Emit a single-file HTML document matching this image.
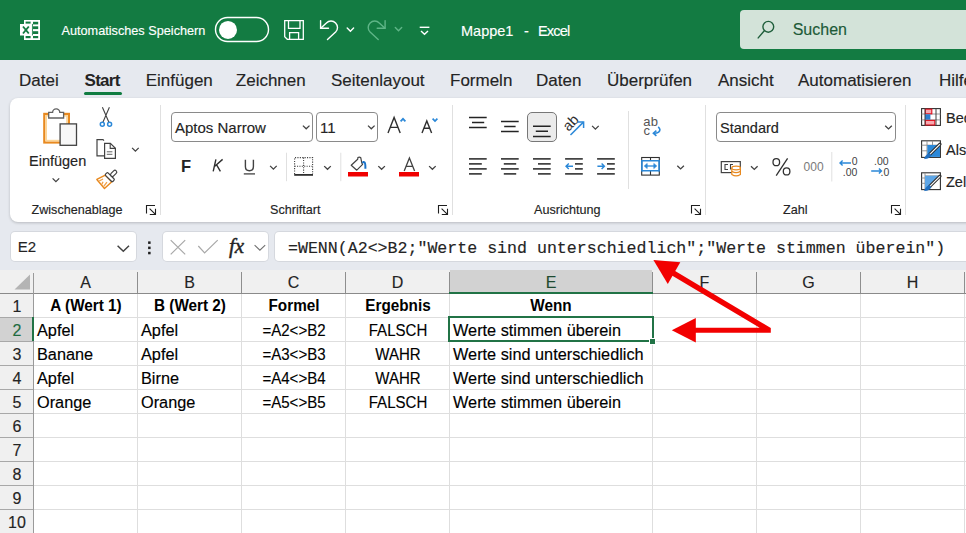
<!DOCTYPE html>
<html><head><meta charset="utf-8">
<style>
*{margin:0;padding:0;box-sizing:border-box}
html,body{width:966px;height:533px;overflow:hidden}
body{position:relative;background:#e6e9ef;font-family:"Liberation Sans",sans-serif;color:#242424}
.a{position:absolute}
.t{position:absolute;white-space:nowrap;-webkit-text-stroke:0.15px currentColor;line-height:0;left:calc(var(--x)*1px);top:calc(var(--b)*1px - var(--f)*0.3465px);font-size:calc(var(--f)*1px)}
.m{font-family:"Liberation Mono",monospace;top:calc(var(--b)*1px - var(--f)*0.2665px)}
.c{transform:translateX(-50%)}
.bold{font-weight:bold;-webkit-text-stroke:0}
svg{position:absolute;overflow:visible}
#title{left:0;top:0;width:966px;height:60px;background:#137b42}
#title .t{color:#fff}
#tabs .t{color:#242424}
#ribbon{left:10px;top:98px;width:990px;height:124px;background:#fff;border-radius:8px;box-shadow:0 1px 3px rgba(0,0,0,.2)}
.sep{position:absolute;width:1px;background:#e0e0e0}
.dd{position:absolute;border:1px solid #8a8a8a;border-radius:4px;background:#fff}
.box{position:absolute;background:#fff;border-radius:4px;box-shadow:0 0 0 1px rgba(0,0,0,.07)}
#grid{left:0;top:270px;width:966px;height:263px;background:#fff}
.ch{position:absolute;top:0;height:24px;background:#f0f0f0}
.rh{position:absolute;left:0;width:33px;background:#f0f0f0}
.gl{position:absolute;background:#dcdcdc}
.cell{color:#000}
</style></head>
<body>
<!-- TITLE BAR -->
<div id="title" class="a">
  <div class="t" style="--x:61.5;--b:35.5;--f:12.7">Automatisches Speichern</div>
  <div class="t" style="--x:461;--b:35.9;--f:14.5">Mappe1</div>
  <div class="t" style="--x:524;--b:35.9;--f:14.5">-</div>
  <div class="t" style="--x:538;--b:35.9;--f:14.5;letter-spacing:-0.8px">Excel</div>
  <div class="a" style="left:740px;top:10px;width:240px;height:39px;background:#d3e3d9;border-radius:4px"></div>
  <div class="t" style="--x:792.7;--b:36;--f:16;color:#1c5a37">Suchen</div>

  <svg style="left:0;top:0" width="966" height="60">
    <!-- excel icon -->
    <rect x="24" y="20" width="16" height="20" fill="#fff"/>
    <g fill="#137b42">
      <rect x="25.6" y="21.6" width="5" height="2"/>
      <rect x="33" y="21.8" width="5.2" height="2.6"/>
      <rect x="33" y="26.3" width="5.2" height="2.8"/>
      <rect x="33" y="31.2" width="5.2" height="2.8"/>
      <rect x="33" y="36" width="5.2" height="2.2"/>
      <rect x="25.6" y="36" width="5" height="2.2"/>
      <rect x="31.8" y="23.9" width="1" height="11.5"/>
    </g>
    <rect x="20" y="24" width="11.8" height="11.5" fill="#fff"/>
    <path d="M23 26.5 L28.8 33.5 M28.8 26.5 L23 33.5" stroke="#137b42" stroke-width="1.9" fill="none"/>
    <!-- toggle -->
    <rect x="215.5" y="17.5" width="53" height="24" rx="12" fill="none" stroke="#fff" stroke-width="1.4"/>
    <circle cx="228" cy="29.9" r="9" fill="#fff"/>
    <!-- save -->
    <g fill="none" stroke="#fff" stroke-width="1.3">
      <path d="M284.7 20.7 H303.3 V39.3 H287.3 L284.7 36.7 Z"/>
      <path d="M288.5 20.7 V28.3 H300 V20.7"/>
      <path d="M289.6 39.3 V32.6 H298.6 V39.3"/>
    </g>
    <!-- undo -->
    <g fill="none" stroke="#fff" stroke-width="1.4" stroke-linecap="round">
      <path d="M320.6 20.6 V28.2 H328.5"/>
      <path d="M321 28 L326.4 22.9 A6.5 6.5 0 0 1 335.6 32.1 L327.5 39.6"/>
      <path d="M347.2 28 L350.4 31.2 L353.6 28"/>
    </g>
    <!-- redo disabled -->
    <g fill="none" stroke="#5fb587" stroke-width="1.4" stroke-linecap="round">
      <path d="M385.1 20.6 V28.2 H377.2"/>
      <path d="M384.7 28 L379.3 22.9 A6.5 6.5 0 0 0 370.1 32.1 L378.2 39.6"/>
      <path d="M395.3 27.6 L398.5 30.8 L401.7 27.6"/>
    </g>
    <!-- customize -->
    <g fill="none" stroke="#fff" stroke-width="1.4">
      <path d="M419.7 27.3 H429.4"/>
      <path d="M421 31 L424.5 34.3 L428 31"/>
    </g>
    <!-- search -->
    <g fill="none" stroke="#1f5e3b" stroke-width="1.4" stroke-linecap="round">
      <circle cx="768.3" cy="26.8" r="5.4"/>
      <path d="M764.3 30.8 L758.2 37.9"/>
    </g>
  </svg>
</div>

<!-- TABS -->
<div id="tabs">
  <div class="t" style="--x:19;--b:87;--f:17">Datei</div>
  <div class="t bold" style="--x:84.5;--b:87;--f:17;letter-spacing:-0.7px">Start</div>
  <div class="a" style="left:84px;top:92px;width:38px;height:3px;background:#107c41;border-radius:2px"></div>
  <div class="t" style="--x:145.7;--b:87;--f:17">Einfügen</div>
  <div class="t" style="--x:235.8;--b:87;--f:17">Zeichnen</div>
  <div class="t" style="--x:331;--b:87;--f:17">Seitenlayout</div>
  <div class="t" style="--x:450;--b:87;--f:17">Formeln</div>
  <div class="t" style="--x:536;--b:87;--f:17">Daten</div>
  <div class="t" style="--x:607;--b:87;--f:17">Überprüfen</div>
  <div class="t" style="--x:718;--b:87;--f:17">Ansicht</div>
  <div class="t" style="--x:798;--b:87;--f:17">Automatisieren</div>
  <div class="t" style="--x:939;--b:87;--f:17">Hilfe</div>
</div>

<!-- RIBBON -->
<div id="ribbon" class="a"></div>
<div id="rib">
  <div class="t" style="--x:29;--b:165.7;--f:14.5">Einfügen</div>
  <div class="t" style="--x:31.5;--b:214.5;--f:12.6">Zwischenablage</div>
  <div class="sep" style="left:160px;top:105px;height:110px"></div>
  <div class="dd" style="left:171px;top:112px;width:142px;height:30px"></div>
  <div class="t" style="--x:175;--b:133.5;--f:15">Aptos Narrow</div>
  <div class="dd" style="left:316px;top:112px;width:62px;height:30px"></div>
  <div class="t" style="--x:320;--b:133.5;--f:15">11</div>
  <div class="t" style="--x:270;--b:214;--f:12.6">Schriftart</div>
  <div class="sep" style="left:452px;top:105px;height:110px"></div>
  <div class="t" style="--x:534;--b:214;--f:12.6">Ausrichtung</div>
  <div class="sep" style="left:705px;top:105px;height:110px"></div>
  <div class="dd" style="left:716px;top:112px;width:180px;height:30px"></div>
  <div class="t" style="--x:720;--b:133.2;--f:14.5">Standard</div>
  <div class="t" style="--x:783;--b:214;--f:12.6">Zahl</div>
  <div class="sep" style="left:905px;top:105px;height:110px"></div>
  <div class="t" style="--x:946;--b:123;--f:14.5">Bedingte</div>
  <div class="t" style="--x:946;--b:155;--f:14.5">Als Tabelle</div>
  <div class="t" style="--x:946;--b:187;--f:14.5">Zellenformat</div>
<svg style="left:0;top:0" width="966" height="230">
 
 <!-- Paste -->
 <rect x="44.3" y="113.9" width="24.6" height="28.6" fill="#fff" stroke="#e8891f" stroke-width="2.2"/>
 <rect x="46.2" y="115.8" width="20.8" height="24.8" fill="none" stroke="#fcd596" stroke-width="1.6"/>
 <path d="M48.7 118 V112.4 H52.6 A3.6 3.6 0 0 1 59.8 112.4 H63.6 V118 Z" fill="#fff" stroke="#616161" stroke-width="1.3"/>
 <rect x="60.1" y="123.9" width="16.4" height="21.4" fill="#f7f7f7" stroke="#424242" stroke-width="1.3"/>
 <g transform="translate(55.9 180)"><path d="M-3.3 -1.6 L0 1.6 L3.3 -1.6" fill="none" stroke="#424242" stroke-width="1.3"/></g>
 <!-- Scissors -->
 <path d="M102.4 107.2 L109 122.5 M109.4 107.2 L102.8 122.5" stroke="#424242" stroke-width="1.1" fill="none"/>
 <circle cx="102.3" cy="124.3" r="2" fill="#fff" stroke="#2b88d8" stroke-width="1.5"/>
 <circle cx="109.6" cy="124.3" r="2" fill="#fff" stroke="#2b88d8" stroke-width="1.5"/>
 <!-- Copy -->
 <path d="M104 155.8 H97 V139.6 H103 L104 140.6" fill="#fff" stroke="#424242" stroke-width="1.2"/>
 <path d="M104.6 143.4 H110.4 L115.4 148.2 V158.4 H104.6 Z" fill="#fff" stroke="#424242" stroke-width="1.2"/>
 <path d="M110.2 143.4 V148.4 H115.4" fill="none" stroke="#424242" stroke-width="1.1"/>
 <path d="M106.8 151.8 H112.4 M106.8 154.3 H112.4" stroke="#616161" stroke-width="1"/>
 <g transform="translate(135.4 149.5)"><path d="M-3.3 -1.6 L0 1.6 L3.3 -1.6" fill="none" stroke="#424242" stroke-width="1.3"/></g>
 <!-- Format painter -->
 <g transform="translate(108.7 178.3) rotate(45)">
   <path d="M-4.6 0.2 L4.6 0.2 L4.2 10.2 L-7.6 9.2 Z" fill="#fff" stroke="#e8891f" stroke-width="1.4" stroke-linejoin="round"/>
   <path d="M-3.5 4.5 L-4.8 8.6 M1.5 4 L2.2 9.2 M-1.5 6.5 L-0.5 9.3" stroke="#f0a048" stroke-width="1.3"/>
   <rect x="-5.2" y="-3.4" width="10.4" height="3.6" rx="1.2" fill="#fff" stroke="#424242" stroke-width="1.2"/>
   <rect x="-1.8" y="-10.6" width="3.6" height="7.2" rx="1.8" fill="#fff" stroke="#424242" stroke-width="1.2"/>
 </g>
 <g transform="translate(146 205)"><g fill="none" stroke="#1e1e1e" stroke-width="1.1"><path d="M0.5 8.5 V0.5 H9"/><path d="M3.6 3.6 L9.2 9.2 M3.8 9.5 H9.5 V3.8"/></g></g>
 <!-- Schriftart -->
 <g transform="translate(306.2 127.2)"><path d="M-3.3 -1.6 L0 1.6 L3.3 -1.6" fill="none" stroke="#424242" stroke-width="1.3"/></g>
 <g transform="translate(371.3 127.2)"><path d="M-3.3 -1.6 L0 1.6 L3.3 -1.6" fill="none" stroke="#424242" stroke-width="1.3"/></g>
 <path d="M388 133.1 L394.1 117.5 L400.2 133.1 M390.3 127.4 H397.9" fill="none" stroke="#303030" stroke-width="1.4"/>
 <path d="M400.6 121.4 L403 118.8 L405.4 121.4" fill="none" stroke="#2b88d8" stroke-width="1.7"/>
 <path d="M422 133.1 L426.8 120.9 L431.6 133.1 M423.8 128.3 H429.9" fill="none" stroke="#303030" stroke-width="1.4"/>
 <path d="M432.6 118.6 L435 121 L437.4 118.6" fill="none" stroke="#2b88d8" stroke-width="1.7"/>
 <text x="181" y="172" font-family="Liberation Sans" font-weight="bold" font-size="16.5" fill="#242424">F</text>
 <path d="M215.9 159.4 L213.2 171.4 M222.6 159.4 L214.8 166.2 M216.6 164.8 L220.4 171.4" fill="none" stroke="#303030" stroke-width="1.4"/>
 <path d="M245.4 159.8 V166.6 Q245.4 170.8 249.4 170.8 Q253.4 170.8 253.4 166.6 V159.8" fill="none" stroke="#424242" stroke-width="1.4"/>
 <path d="M243.8 173.9 H255" stroke="#424242" stroke-width="1.3"/>
 <g transform="translate(273.4 167.5)"><path d="M-3.3 -1.6 L0 1.6 L3.3 -1.6" fill="none" stroke="#424242" stroke-width="1.3"/></g>
 <rect x="286" y="152.7" width="1" height="28.5" fill="#e0e0e0"/>
 <!-- borders -->
 <g fill="none" stroke="#404040" stroke-width="1.1" stroke-dasharray="1.1 1.3">
   <path d="M294.6 174 V157.6 H312.6 V174"/>
   <path d="M303.6 157.6 V174 M294.6 166.3 H312.6"/>
 </g>
 <path d="M294.2 174.9 H313" stroke="#303030" stroke-width="1.8"/>
 <g transform="translate(327.5 167.7)"><path d="M-3.3 -1.6 L0 1.6 L3.3 -1.6" fill="none" stroke="#424242" stroke-width="1.3"/></g>
 <rect x="340.3" y="152.7" width="1" height="28.5" fill="#e0e0e0"/>
 <!-- fill color -->
 <path d="M357.9 157.6 Q359.5 156.6 360.8 157.8 L361.8 163 L362.6 164.4 L356.8 170.2 L351.2 165.3 L357.7 159.2 Z" fill="#fff" stroke="#424242" stroke-width="1.2" stroke-linejoin="round"/>
 <path d="M362.6 163 Q363.4 161.4 364.6 162.4 Q365.5 163.4 365.4 168.8" fill="none" stroke="#1a72c8" stroke-width="2"/>
 <rect x="348" y="172" width="20" height="4.5" fill="#f00000"/>
 <g transform="translate(381.6 167.7)"><path d="M-3.3 -1.6 L0 1.6 L3.3 -1.6" fill="none" stroke="#424242" stroke-width="1.3"/></g>
 <!-- font color -->
 <path d="M404.2 170.9 L409.4 158 L414.6 170.9 M406.1 166.4 H412.7" fill="none" stroke="#424242" stroke-width="1.3"/>
 <rect x="399" y="172" width="20" height="4.5" fill="#f00000"/>
 <g transform="translate(432.4 167.7)"><path d="M-3.3 -1.6 L0 1.6 L3.3 -1.6" fill="none" stroke="#424242" stroke-width="1.3"/></g>
 <g transform="translate(438 205)"><g fill="none" stroke="#1e1e1e" stroke-width="1.1"><path d="M0.5 8.5 V0.5 H9"/><path d="M3.6 3.6 L9.2 9.2 M3.8 9.5 H9.5 V3.8"/></g></g>
 <!-- Ausrichtung row1 -->
 <g stroke="#242424" stroke-width="1.5" fill="none">
   <path d="M469 117.6 H486.7 M472 122.6 H484.2 M469 127.6 H486.7"/>
   <path d="M501 121.4 H518.7 M504.2 126.4 H515.6 M501 131.4 H518.7"/>
 </g>
 <rect x="527.5" y="112.5" width="29" height="29" rx="4.5" fill="#ebebeb" stroke="#777" stroke-width="1"/>
 <path d="M533 126.2 H550.7 M535.8 131.3 H548 M533 136.4 H550.7" stroke="#242424" stroke-width="1.5" fill="none"/>
 <text transform="translate(568.4 131.9) rotate(-45)" font-family="Liberation Sans" font-size="14.5" fill="#303030">ab</text>
 <path d="M570.5 135 L583.4 122.1" fill="none" stroke="#2b88d8" stroke-width="1.5"/>
 <path d="M577.4 121.9 H583.6 V128.1" fill="none" stroke="#2b88d8" stroke-width="1.5"/>
 <g transform="translate(595.4 127.5)"><path d="M-3.3 -1.6 L0 1.6 L3.3 -1.6" fill="none" stroke="#424242" stroke-width="1.3"/></g>
 <!-- row 2 -->
 <g stroke="#444" stroke-width="1.7" fill="none">
   <path d="M469 158.9 H486.7 M469 163.9 H481.8 M469 168.9 H486.7 M469 173.9 H481.8"/>
   <path d="M501 158.9 H518.7 M503.8 163.9 H516.2 M501 168.9 H518.7 M503.8 173.9 H516.2"/>
   <path d="M533 158.9 H550.7 M538 163.9 H550.7 M533 168.9 H550.7 M538 173.9 H550.7"/>
   <path d="M565.1 158.9 H582.8 M575 163.9 H582.8 M575 168.9 H582.8 M565.1 173.9 H582.8"/>
   <path d="M597.1 158.9 H614.8 M607 163.9 H614.8 M607 168.9 H614.8 M597.1 173.9 H614.8"/>
 </g>
 <path d="M566 166.2 H573 M568.8 163.4 L566 166.2 L568.8 169" fill="none" stroke="#2b88d8" stroke-width="1.4"/>
 <path d="M597.4 166.2 H604.4 M601.6 163.4 L604.4 166.2 L601.6 169" fill="none" stroke="#2b88d8" stroke-width="1.4"/>
 <rect x="628" y="111" width="1" height="78" fill="#e0e0e0"/>
 <!-- wrap -->
 <text x="643.2" y="126.4" font-family="Liberation Sans" font-size="13" fill="#555" letter-spacing="0.4">ab</text>
 <text x="643.6" y="135.3" font-family="Liberation Sans" font-size="13" fill="#555">c</text>
 <path d="M658.2 126.8 Q661.4 129.6 658.6 132.2 Q657.3 133.2 653.8 133.2" fill="none" stroke="#2b88d8" stroke-width="1.6"/>
 <path d="M656.4 130.6 L653.4 133.2 L656.4 135.8" fill="none" stroke="#2b88d8" stroke-width="1.6"/>
 <!-- merge -->
 <rect x="641.7" y="157.5" width="17.6" height="17.6" fill="#fff" stroke="#303030" stroke-width="1.1"/>
 <path d="M650.5 157.5 V160.5 M650.5 171 V175.1" stroke="#303030" stroke-width="1.1"/>
 <path d="M641.9 160.7 H659.1 M641.9 170.7 H659.1" stroke="#2b88d8" stroke-width="1.6"/>
 <path d="M641.9 160 V171.4 M659.1 160 V171.4" stroke="#2b88d8" stroke-width="1.6"/>
 <path d="M646.5 166 H654.5" stroke="#2b88d8" stroke-width="1.3"/>
 <path d="M644.2 166 L647.2 163.4 V168.6 Z M656.8 166 L653.8 163.4 V168.6 Z" fill="#2b88d8" stroke="#2b88d8" stroke-width="0.6" stroke-linejoin="round"/>
 <g transform="translate(680.6 167.3)"><path d="M-3.3 -1.6 L0 1.6 L3.3 -1.6" fill="none" stroke="#424242" stroke-width="1.3"/></g>
 <g transform="translate(691 205)"><g fill="none" stroke="#1e1e1e" stroke-width="1.1"><path d="M0.5 8.5 V0.5 H9"/><path d="M3.6 3.6 L9.2 9.2 M3.8 9.5 H9.5 V3.8"/></g></g>
 <!-- Zahl -->
 <g transform="translate(888.5 127.3)"><path d="M-3.3 -1.6 L0 1.6 L3.3 -1.6" fill="none" stroke="#424242" stroke-width="1.3"/></g>
 <rect x="721.3" y="161.6" width="19" height="11" fill="#fff" stroke="#424242" stroke-width="1.2"/>
 <path d="M728 164.5 H725 V169.5 H728 M733 164.5 H730.5 V169.5" fill="none" stroke="#424242" stroke-width="1.1"/>
 <g fill="#fff" stroke="#e8891f" stroke-width="1.2">
   <path d="M731.8 168 V174.4 Q736.1 177.4 740.4 174.4 V168"/>
   <ellipse cx="736.1" cy="168" rx="4.3" ry="1.8"/>
   <path d="M731.8 171.2 Q736.1 174 740.4 171.2" fill="none"/>
 </g>
 <g transform="translate(754.3 167.8)"><path d="M-3.3 -1.6 L0 1.6 L3.3 -1.6" fill="none" stroke="#424242" stroke-width="1.3"/></g>
 <g fill="none" stroke="#303030" stroke-width="1.3">
   <ellipse cx="776.3" cy="162.2" rx="3.3" ry="3.5"/>
   <ellipse cx="786.6" cy="171.4" rx="3.3" ry="3.5"/>
   <path d="M787.6 158.3 L776.2 175.7"/>
 </g>
 <text x="803.5" y="171" font-family="Liberation Sans" font-size="12" fill="#7a7a7a" textLength="20.3">000</text>
 <rect x="831.3" y="152" width="1" height="29.5" fill="#e0e0e0"/>
 <path d="M840 163 H851 M842.6 160.4 L840 163 L842.6 165.6" fill="none" stroke="#2b88d8" stroke-width="1.4"/>
 <text x="851.8" y="165.4" font-family="Liberation Sans" font-size="10.5" fill="#424242">0</text>
 <text x="842.8" y="175.9" font-family="Liberation Sans" font-size="10.5" fill="#424242">.00</text>
 <text x="874" y="165.4" font-family="Liberation Sans" font-size="10.5" fill="#424242">.00</text>
 <path d="M871.2 171 H881.5 M878.9 168.4 L881.5 171 L878.9 173.6" fill="none" stroke="#2b88d8" stroke-width="1.4"/>
 <text x="880.6" y="175.9" font-family="Liberation Sans" font-size="10.5" fill="#424242">.0</text>
 <g transform="translate(891 205)"><g fill="none" stroke="#1e1e1e" stroke-width="1.1"><path d="M0.5 8.5 V0.5 H9"/><path d="M3.6 3.6 L9.2 9.2 M3.8 9.5 H9.5 V3.8"/></g></g>
 <!-- Styles -->
 <g>
   <rect x="921.6" y="108.6" width="18.8" height="16.8" fill="#fff" stroke="#303030" stroke-width="1.1"/>
   <path d="M921.6 114 H940.4 M921.6 119.9 H940.4" stroke="#8a8a8a" stroke-width="0.9"/>
   <rect x="925.4" y="109.2" width="6.4" height="4.6" fill="#f7a9b0" stroke="#e0101e" stroke-width="1.1"/>
   <rect x="925" y="114.3" width="5.4" height="5.4" fill="#2b7fd0"/>
   <rect x="925.4" y="120.4" width="9.4" height="4.6" fill="#f7a9b0" stroke="#e0101e" stroke-width="1.1"/>
   <path d="M925 108.6 V125.4 M936 108.6 V125.4" stroke="#404040" stroke-width="1"/>
 </g>
 <g>
   <rect x="921.6" y="140.8" width="18.8" height="16.6" fill="#fff" stroke="#303030" stroke-width="1.1"/>
   <path d="M927 140.8 V157.4 M932.5 140.8 V145 M921.6 145.2 H940.4 M921.6 150.8 H927" stroke="#8a8a8a" stroke-width="0.9"/>
   <path d="M927.3 145 H940 V156.9 H927.3 Z" fill="#2b88d8"/>
   <path d="M940 144.2 L929.5 154.7" stroke="#303030" stroke-width="3.2" stroke-linecap="round"/>
   <path d="M939.6 144.6 L929.8 154.4" stroke="#fff" stroke-width="1.2" stroke-linecap="round"/>
   <path d="M929.6 153.4 Q925.4 154.8 924.6 158.6 Q928.8 158.6 931 155.4 Z" fill="#1f6fc0" stroke="#1f6fc0" stroke-width="0.8"/>
 </g>
 <g>
   <rect x="921.6" y="172.8" width="18.8" height="16.8" fill="#fff" stroke="#303030" stroke-width="1.1"/>
   <path d="M925 172.8 V189.6 M921.6 178 H925 M921.6 183.3 H925 M925 175.9 H939" stroke="#8a8a8a" stroke-width="0.9"/>
   <path d="M925 175.8 H939.5 L927 188.6 H925 Z" fill="#5ea6e6"/>
   <path d="M940 176.2 L929.5 186.7" stroke="#303030" stroke-width="3.2" stroke-linecap="round"/>
   <path d="M939.6 176.6 L929.8 186.4" stroke="#fff" stroke-width="1.2" stroke-linecap="round"/>
   <path d="M929.6 185.4 Q925.4 186.8 924.6 190.6 Q928.8 190.6 931 187.4 Z" fill="#1f6fc0" stroke="#1f6fc0" stroke-width="0.8"/>
 </g>
</svg>

</div>

<!-- FORMULA BAR -->
<div class="box" style="left:11px;top:232px;width:125px;height:29px"></div>
<div class="t" style="--x:17.8;--b:252.5;--f:15">E2</div>
<div class="box" style="left:163px;top:232px;width:105px;height:29px"></div>
<div class="box" style="left:275px;top:232px;width:700px;height:29px"></div>
<div class="t m" style="--x:288;--b:253;--f:16.6">=WENN(A2&lt;&gt;B2;"Werte sind unterschiedlich";"Werte stimmen überein")</div>

<svg style="left:0;top:0" width="966" height="270">
 <path d="M117.6 245.8 L123.3 251.3 L129 245.8" fill="none" stroke="#424242" stroke-width="1.5"/>
 <rect x="148.1" y="241.4" width="2.5" height="2.5" fill="#1e1e1e"/>
 <rect x="148.1" y="246.60000000000002" width="2.5" height="2.5" fill="#1e1e1e"/>
 <rect x="148.1" y="251.8" width="2.5" height="2.5" fill="#1e1e1e"/>
 <path d="M170.7 240.1 L185.2 254.4 M185.2 240.1 L170.7 254.4" fill="none" stroke="#a8a8a8" stroke-width="1.2"/>
 <path d="M198.3 246 L204.6 252.9 L217.7 240.1" fill="none" stroke="#a8a8a8" stroke-width="1.2"/>
 <text x="229" y="253.2" font-family="Liberation Serif" font-style="italic" font-size="21" fill="#242424" stroke="#242424" stroke-width="0.45">fx</text>
 <path d="M254.6 245.2 L259.9 250.2 L265.2 245.2" fill="none" stroke="#707070" stroke-width="1.1"/>
</svg>
<!-- GRID -->
<div id="grid" class="a"></div>
<div class="a" style="left:0;top:270px;width:966px;height:23px;background:#f0f0f0"></div>
<div class="a" style="left:450px;top:270px;width:202px;height:23px;background:#d2d2d2"></div>
<div class="a" style="left:0;top:294px;width:33px;height:239px;background:#f0f0f0"></div>
<div class="a" style="left:0;top:318px;width:32px;height:23px;background:#d2d2d2"></div>
<div class="a" style="left:137px;top:294px;width:1px;height:239px;background:#dedede"></div>
<div class="a" style="left:241px;top:294px;width:1px;height:239px;background:#dedede"></div>
<div class="a" style="left:345px;top:294px;width:1px;height:239px;background:#dedede"></div>
<div class="a" style="left:449px;top:294px;width:1px;height:239px;background:#dedede"></div>
<div class="a" style="left:652px;top:294px;width:1px;height:239px;background:#dedede"></div>
<div class="a" style="left:756px;top:294px;width:1px;height:239px;background:#dedede"></div>
<div class="a" style="left:860px;top:294px;width:1px;height:239px;background:#dedede"></div>
<div class="a" style="left:964px;top:294px;width:1px;height:239px;background:#dedede"></div>
<div class="a" style="left:34px;top:317px;width:932px;height:1px;background:#dedede"></div>
<div class="a" style="left:34px;top:341px;width:932px;height:1px;background:#dedede"></div>
<div class="a" style="left:34px;top:365px;width:932px;height:1px;background:#dedede"></div>
<div class="a" style="left:34px;top:389px;width:932px;height:1px;background:#dedede"></div>
<div class="a" style="left:34px;top:413px;width:932px;height:1px;background:#dedede"></div>
<div class="a" style="left:34px;top:437px;width:932px;height:1px;background:#dedede"></div>
<div class="a" style="left:34px;top:461px;width:932px;height:1px;background:#dedede"></div>
<div class="a" style="left:34px;top:485px;width:932px;height:1px;background:#dedede"></div>
<div class="a" style="left:34px;top:509px;width:932px;height:1px;background:#dedede"></div>
<div class="a" style="left:137px;top:272px;width:1px;height:21px;background:#8e8e8e"></div>
<div class="a" style="left:241px;top:272px;width:1px;height:21px;background:#8e8e8e"></div>
<div class="a" style="left:345px;top:272px;width:1px;height:21px;background:#8e8e8e"></div>
<div class="a" style="left:449px;top:272px;width:1px;height:21px;background:#8e8e8e"></div>
<div class="a" style="left:652px;top:272px;width:1px;height:21px;background:#8e8e8e"></div>
<div class="a" style="left:756px;top:272px;width:1px;height:21px;background:#8e8e8e"></div>
<div class="a" style="left:860px;top:272px;width:1px;height:21px;background:#8e8e8e"></div>
<div class="a" style="left:964px;top:272px;width:1px;height:21px;background:#8e8e8e"></div>
<div class="a" style="left:0;top:317px;width:33px;height:1px;background:#a8a8a8"></div>
<div class="a" style="left:0;top:341px;width:33px;height:1px;background:#a8a8a8"></div>
<div class="a" style="left:0;top:365px;width:33px;height:1px;background:#a8a8a8"></div>
<div class="a" style="left:0;top:389px;width:33px;height:1px;background:#a8a8a8"></div>
<div class="a" style="left:0;top:413px;width:33px;height:1px;background:#a8a8a8"></div>
<div class="a" style="left:0;top:437px;width:33px;height:1px;background:#a8a8a8"></div>
<div class="a" style="left:0;top:461px;width:33px;height:1px;background:#a8a8a8"></div>
<div class="a" style="left:0;top:485px;width:33px;height:1px;background:#a8a8a8"></div>
<div class="a" style="left:0;top:509px;width:33px;height:1px;background:#a8a8a8"></div>
<div class="a" style="left:0;top:293px;width:966px;height:1px;background:#8a8a8a"></div>
<div class="a" style="left:33px;top:273px;width:1px;height:260px;background:#9a9a9a"></div>
<div class="a" style="left:32px;top:317px;width:2px;height:24px;background:#217346"></div>
<div class="a" style="left:449px;top:292px;width:204px;height:2px;background:#217346"></div>
<svg style="left:0;top:269px" width="33" height="24"><path d="M14.5 20.5 L30 20.5 L30 5.5 Z" fill="#b4b4b4"/></svg>
<div class="t c" style="--x:85.5;--b:288.2;--f:16;color:#242424">A</div>
<div class="t c" style="--x:189.5;--b:288.2;--f:16;color:#242424">B</div>
<div class="t c" style="--x:293.5;--b:288.2;--f:16;color:#242424">C</div>
<div class="t c" style="--x:397.5;--b:288.2;--f:16;color:#242424">D</div>
<div class="t c" style="--x:551.0;--b:288.2;--f:16;color:#1d4a31">E</div>
<div class="t c" style="--x:704.5;--b:288.2;--f:16;color:#242424">F</div>
<div class="t c" style="--x:808.5;--b:288.2;--f:16;color:#242424">G</div>
<div class="t c" style="--x:912.5;--b:288.2;--f:16;color:#242424">H</div>
<div class="t c" style="--x:17;--b:312.5;--f:16;color:#242424">1</div>
<div class="t c" style="--x:17;--b:336.5;--f:16;color:#1e6b40">2</div>
<div class="t c" style="--x:17;--b:360.5;--f:16;color:#242424">3</div>
<div class="t c" style="--x:17;--b:384.5;--f:16;color:#242424">4</div>
<div class="t c" style="--x:17;--b:408.5;--f:16;color:#242424">5</div>
<div class="t c" style="--x:17;--b:432.5;--f:16;color:#242424">6</div>
<div class="t c" style="--x:17;--b:456.5;--f:16;color:#242424">7</div>
<div class="t c" style="--x:17;--b:480.5;--f:16;color:#242424">8</div>
<div class="t c" style="--x:17;--b:504.5;--f:16;color:#242424">9</div>
<div class="t c" style="--x:17;--b:528.5;--f:16;color:#242424">10</div>
<div class="t bold cell" style="--x:85.5;--b:311.8;--f:16;transform:translateX(-50%) scaleX(0.955)">A (Wert 1)</div>
<div class="t bold cell" style="--x:189.5;--b:311.8;--f:16;transform:translateX(-50%) scaleX(0.955)">B (Wert 2)</div>
<div class="t bold cell" style="--x:293.5;--b:311.8;--f:16;transform:translateX(-50%) scaleX(0.955)">Formel</div>
<div class="t bold cell" style="--x:397.5;--b:311.8;--f:16;transform:translateX(-50%) scaleX(0.955)">Ergebnis</div>
<div class="t bold cell" style="--x:551.0;--b:311.8;--f:16;transform:translateX(-50%) scaleX(0.955)">Wenn</div>
<div class="t cell" style="--x:37;--b:335.6;--f:16.3">Apfel</div>
<div class="t cell" style="--x:141;--b:335.6;--f:16.3">Apfel</div>
<div class="t cell" style="--x:293.5;--b:335.90000000000003;--f:17.2;transform:translateX(-50%) scaleX(0.875)">=A2&lt;&gt;B2</div>
<div class="t cell" style="--x:397.5;--b:335.90000000000003;--f:17.2;transform:translateX(-50%) scaleX(0.875)">FALSCH</div>
<div class="t cell" style="--x:453;--b:335.6;--f:16.3">Werte stimmen überein</div>
<div class="t cell" style="--x:37;--b:359.6;--f:16.3">Banane</div>
<div class="t cell" style="--x:141;--b:359.6;--f:16.3">Apfel</div>
<div class="t cell" style="--x:293.5;--b:359.90000000000003;--f:17.2;transform:translateX(-50%) scaleX(0.875)">=A3&lt;&gt;B3</div>
<div class="t cell" style="--x:397.5;--b:359.90000000000003;--f:17.2;transform:translateX(-50%) scaleX(0.875)">WAHR</div>
<div class="t cell" style="--x:453;--b:359.6;--f:16.3">Werte sind unterschiedlich</div>
<div class="t cell" style="--x:37;--b:383.6;--f:16.3">Apfel</div>
<div class="t cell" style="--x:141;--b:383.6;--f:16.3">Birne</div>
<div class="t cell" style="--x:293.5;--b:383.90000000000003;--f:17.2;transform:translateX(-50%) scaleX(0.875)">=A4&lt;&gt;B4</div>
<div class="t cell" style="--x:397.5;--b:383.90000000000003;--f:17.2;transform:translateX(-50%) scaleX(0.875)">WAHR</div>
<div class="t cell" style="--x:453;--b:383.6;--f:16.3">Werte sind unterschiedlich</div>
<div class="t cell" style="--x:37;--b:407.6;--f:16.3">Orange</div>
<div class="t cell" style="--x:141;--b:407.6;--f:16.3">Orange</div>
<div class="t cell" style="--x:293.5;--b:407.90000000000003;--f:17.2;transform:translateX(-50%) scaleX(0.875)">=A5&lt;&gt;B5</div>
<div class="t cell" style="--x:397.5;--b:407.90000000000003;--f:17.2;transform:translateX(-50%) scaleX(0.875)">FALSCH</div>
<div class="t cell" style="--x:453;--b:407.6;--f:16.3">Werte stimmen überein</div>
<div class="a" style="left:448px;top:316px;width:206px;height:26px;border:2px solid #217346"></div>
<div class="a" style="left:649px;top:338px;width:7px;height:7px;background:#217346;border:1px solid #fff"></div>
<svg style="left:0;top:0" width="966" height="533">
 <g fill="#f20000">
  <path d="M653.4 260 L680.3 262.3 L667.8 283.9 Z"/>
  <path d="M668 266.75 L770.8 328 L770.8 332.8 L690 332.8 L690 327.8 L759.7 327.8 L664 270.8 Z"/>
  <path d="M671.8 330.3 L695.8 318 L695.8 342.5 Z"/>
 </g>
</svg>
</body></html>
